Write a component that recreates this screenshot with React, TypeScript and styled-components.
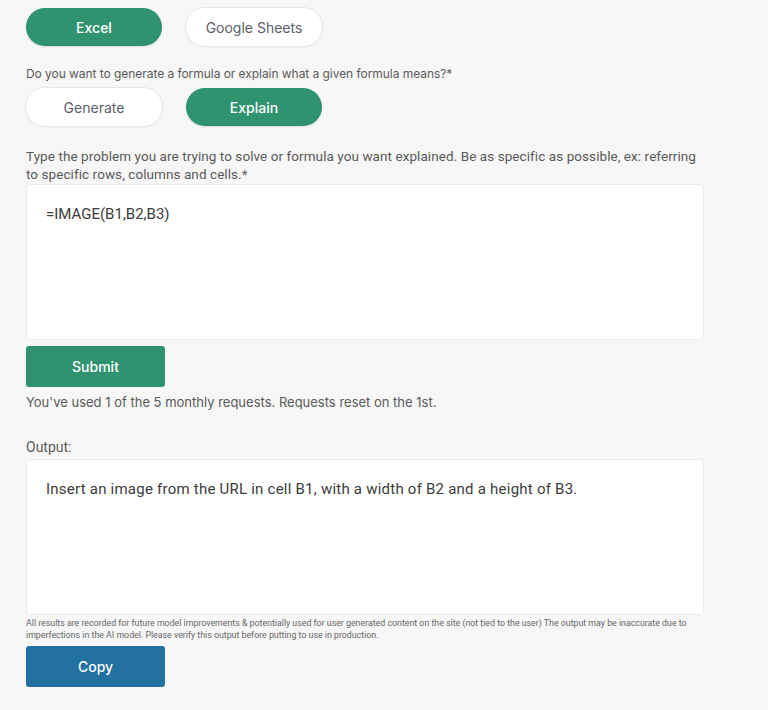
import React from "react";
import styled, { createGlobalStyle } from "styled-components";

const Global = createGlobalStyle`
  html, body { margin: 0; padding: 0; background: #f7f7f7; }
  body { font-family: "Inter", "Noto Sans", sans-serif; color: #555; }
  * { box-sizing: border-box; }
`;

const Page = styled.div`
  display: flex;
  flex-direction: column;
  padding: 0 64px 0 26px;
  margin-top: -18px;
`;

const Label = styled.div<{ $condensed?: boolean; $size?: number; $spacing?: number }>`
  font-family: ${(p) => (p.$condensed ? '"Roboto", sans-serif' : '"Inter", sans-serif')};
  font-size: ${(p) => p.$size ?? 13}px;
  line-height: 18px;
  color: #5a5a5a;
  letter-spacing: ${(p) => p.$spacing ?? 0}px;
  max-width: 672px;
`;

const ChoiceRow = styled.div`
  display: flex;
  gap: 22px;
  align-items: center;
  margin-left: -1px;
`;

const Choice = styled.button<{ $active?: boolean }>`
  width: ${(p) => (p.$active ? "136px" : "138px")};
  height: ${(p) => (p.$active ? "38px" : "40px")};
  margin: ${(p) => (p.$active ? "0 1px" : "0")};
  border-radius: 20px;
  border: ${(p) => (p.$active ? "none" : "1px solid #e2e7ee")};
  background: ${(p) => (p.$active ? "#30936f" : "#ffffff")};
  color: ${(p) => (p.$active ? "#ffffff" : "#5b6069")};
  font-family: "Inter", sans-serif;
  font-size: 14px;
  font-weight: ${(p) => (p.$active ? 500 : 400)};
  box-shadow: ${(p) => (p.$active ? "0 1px 2px rgba(0,0,0,0.12)" : "0 1px 2px rgba(0,0,0,0.04)")};
  padding: 0;
`;

const Box = styled.div<{ $spacing?: number }>`
  width: 678px;
  height: 156px;
  background: #fff;
  border: 1px solid #e8ebef;
  border-radius: 4px;
  padding: 19px 19px;
  font-family: "Roboto", sans-serif;
  font-size: 15px;
  line-height: 20px;
  letter-spacing: ${(p) => p.$spacing ?? 0}px;
  color: #3c3c3c;
`;

const ActionButton = styled.button<{ $color: string }>`
  width: 139px;
  height: 41px;
  border: none;
  border-radius: 3px;
  background: ${(p) => p.$color};
  color: #fff;
  font-family: "Inter", sans-serif;
  font-size: 14px;
  font-weight: 500;
  padding: 0;
`;

const Note = styled.div`
  font-family: "Roboto", sans-serif;
  font-size: 8.8px;
  line-height: 12px;
  color: #666;
`;

const Spacer = styled.div<{ $h: number }>`
  height: ${(p) => p.$h}px;
  flex-shrink: 0;
`;

export default function App() {
  return (
    <>
      <Global />
      <Page>
        <Label>Is the template for Excel or Google Sheets?*</Label>
        <Spacer $h={7} />
        <ChoiceRow>
          <Choice $active>Excel</Choice>
          <Choice>Google Sheets</Choice>
        </ChoiceRow>
        <Spacer $h={18} />
        <Label $size={12} $spacing={-0.05}>
          Do you want to generate a formula or explain what a given formula means?*
        </Label>
        <Spacer $h={4} />
        <ChoiceRow>
          <Choice>Generate</Choice>
          <Choice $active>Explain</Choice>
        </ChoiceRow>
        <Spacer $h={20} />
        <Label $condensed $size={13.5} $spacing={0.07}>
          Type the problem you are trying to solve or formula you want explained. Be as specific as possible, ex: referring
          to specific rows, columns and cells.*
        </Label>
        <Spacer $h={1} />
        <Box>=IMAGE(B1,B2,B3)</Box>
        <Spacer $h={6} />
        <ActionButton $color="#30936f">Submit</ActionButton>
        <Spacer $h={6} />
        <Label>You've used 1 of the 5 monthly requests. Requests reset on the 1st.</Label>
        <Spacer $h={27} />
        <Label $condensed $size={14}>Output:</Label>
        <Spacer $h={3} />
        <Box $spacing={0.23}>Insert an image from the URL in cell B1, with a width of B2 and a height of B3.</Box>
        <Spacer $h={2} />
        <Note>
          All results are recorded for future model improvements &amp; potentially used for user generated content on the
          site (not tied to the user) The output may be inaccurate due to imperfections in the AI model. Please verify this
          output before putting to use in production.
        </Note>
        <Spacer $h={5} />
        <ActionButton $color="#2271a1">Copy</ActionButton>
      </Page>
    </>
  );
}
